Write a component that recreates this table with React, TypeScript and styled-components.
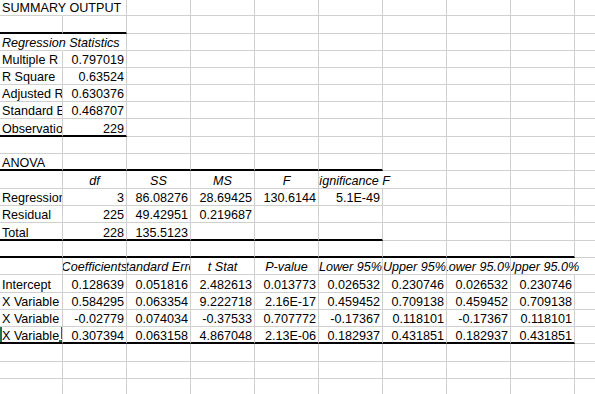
import React from 'react';
import styled, { createGlobalStyle } from 'styled-components';

const GRID = '#d0d0d0';

const Global = createGlobalStyle`
  html, body {
    margin: 0;
    padding: 0;
    background: #fff;
    overflow: hidden;
  }
`;

const Sheet = styled.div`
  display: flex;
  flex-direction: column;
  width: 595px;
  height: 394px;
  overflow: hidden;
  font-family: 'Liberation Sans', Arial, sans-serif;
  font-size: 12.6px;
  color: #000;
`;

const Row = styled.div<{ $h: number }>`
  display: grid;
  grid-template-columns: 63px repeat(9, 64px);
  height: ${(p) => p.$h}px;
  flex: none;
`;

type Align = 'left' | 'right' | 'center';

const Cell = styled.div<{
  $align: Align;
  $italic?: boolean;
  $over?: boolean;
  $thick?: boolean;
  $span?: number;
  $padRight?: number;
}>`
  position: relative;
  box-sizing: border-box;
  min-width: 0;
  grid-column: span ${(p) => p.$span ?? 1};
  display: flex;
  align-items: flex-end;
  justify-content: ${(p) =>
    p.$align === 'left' ? 'flex-start' : p.$align === 'right' ? 'flex-end' : 'center'};
  padding: 0 ${(p) => p.$padRight ?? 2}px 0 2px;
  border-right: 1px solid ${(p) => (p.$over ? 'transparent' : GRID)};
  border-bottom: ${(p) => (p.$thick ? '2px solid #000' : `1px solid ${GRID}`)};
  overflow: ${(p) => (p.$over ? 'visible' : 'hidden')};
  white-space: nowrap;
  font-style: ${(p) => (p.$italic ? 'italic' : 'normal')};
`;

const Text = styled.span<{ $thick?: boolean }>`
  line-height: 14px;
  margin-bottom: ${(p) => (p.$thick ? -1 : 0)}px;
`;

const Selection = styled.div`
  position: absolute;
  top: -2px;
  left: 0;
  right: -1px;
  bottom: -2px;
  border: 2px solid #217346;
  box-sizing: border-box;
  z-index: 2;
  pointer-events: none;
`;

const Handle = styled.div`
  position: absolute;
  right: -4px;
  bottom: -4px;
  width: 5px;
  height: 5px;
  background: #217346;
  border: 1px solid #fff;
`;

interface CellSpec {
  t?: string;
  a?: Align;
  i?: boolean;
  over?: boolean;
  span?: number;
  padRight?: number;
  sel?: boolean;
}

interface RowSpec {
  h: number;
  cells: CellSpec[];
  thick?: number;
}

const num = (t: string): CellSpec => ({ t, a: 'right' });
const head = (t: string): CellSpec => ({ t, a: 'center', i: true });
// header that spills into the empty column on its right
const spill = (t: string): CellSpec => ({ ...head(t), span: 2, padRight: 66 });

const coef = (label: string, vals: string[], sel = false): CellSpec[] => [
  { t: label, sel },
  ...vals.map(num),
];

const rows: RowSpec[] = [
  { h: 16, cells: [{ t: 'SUMMARY OUTPUT', over: true }] },
  { h: 18, cells: [], thick: 2 },
  { h: 17, cells: [{ t: 'Regression Statistics', i: true, over: true }] },
  { h: 17, cells: [{ t: 'Multiple R' }, num('0.797019')] },
  { h: 17, cells: [{ t: 'R Square' }, num('0.63524')] },
  { h: 17, cells: [{ t: 'Adjusted R Square' }, num('0.630376')] },
  { h: 17, cells: [{ t: 'Standard Error' }, num('0.468707')] },
  { h: 18, cells: [{ t: 'Observations' }, num('229')], thick: 2 },
  { h: 17, cells: [] },
  { h: 17, cells: [{ t: 'ANOVA' }], thick: 6 },
  {
    h: 18,
    cells: [{}, head('df'), head('SS'), head('MS'), head('F'), spill('Significance F')],
  },
  {
    h: 17,
    cells: [
      { t: 'Regression' },
      num('3'),
      num('86.08276'),
      num('28.69425'),
      num('130.6144'),
      num('5.1E-49'),
    ],
  },
  { h: 17, cells: [{ t: 'Residual' }, num('225'), num('49.42951'), num('0.219687')] },
  { h: 18, cells: [{ t: 'Total' }, num('228'), num('135.5123')], thick: 6 },
  { h: 17, cells: [], thick: 9 },
  {
    h: 17,
    cells: [
      {},
      head('Coefficients'),
      head('Standard Error'),
      head('t Stat'),
      head('P-value'),
      head('Lower 95%'),
      head('Upper 95%'),
      head('Lower 95.0%'),
      spill('Upper 95.0%'),
    ],
  },
  {
    h: 18,
    cells: coef('Intercept', [
      '0.128639', '0.051816', '2.482613', '0.013773', '0.026532', '0.230746', '0.026532', '0.230746',
    ]),
  },
  {
    h: 17,
    cells: coef('X Variable 1', [
      '0.584295', '0.063354', '9.222718', '2.16E-17', '0.459452', '0.709138', '0.459452', '0.709138',
    ]),
  },
  {
    h: 17,
    cells: coef('X Variable 2', [
      '-0.02779', '0.074034', '-0.37533', '0.707772', '-0.17367', '0.118101', '-0.17367', '0.118101',
    ]),
  },
  {
    h: 17,
    cells: coef(
      'X Variable 3',
      ['0.307394', '0.063158', '4.867048', '2.13E-06', '0.182937', '0.431851', '0.182937', '0.431851'],
      true
    ),
    thick: 9,
  },
  { h: 18, cells: [] },
  { h: 17, cells: [] },
  { h: 17, cells: [] },
];

const COLS = 10;

const SheetRow: React.FC<{ row: RowSpec }> = ({ row }) => {
  const out: React.ReactNode[] = [];
  let col = 0;
  let idx = 0;
  while (col < COLS) {
    const c = row.cells[idx] ?? {};
    const span = c.span ?? 1;
    const thick = col < (row.thick ?? 0);
    out.push(
      <Cell
        key={col}
        $align={c.a ?? 'left'}
        $italic={c.i}
        $over={c.over}
        $thick={thick}
        $span={span}
        $padRight={c.padRight}
      >
        {c.t && <Text $thick={thick}>{c.t}</Text>}
        {c.sel && (
          <Selection>
            <Handle />
          </Selection>
        )}
      </Cell>
    );
    col += span;
    idx += 1;
  }
  return <Row $h={row.h}>{out}</Row>;
};

export default function App() {
  return (
    <>
      <Global />
      <Sheet>
        {rows.map((r, i) => (
          <SheetRow key={i} row={r} />
        ))}
      </Sheet>
    </>
  );
}
